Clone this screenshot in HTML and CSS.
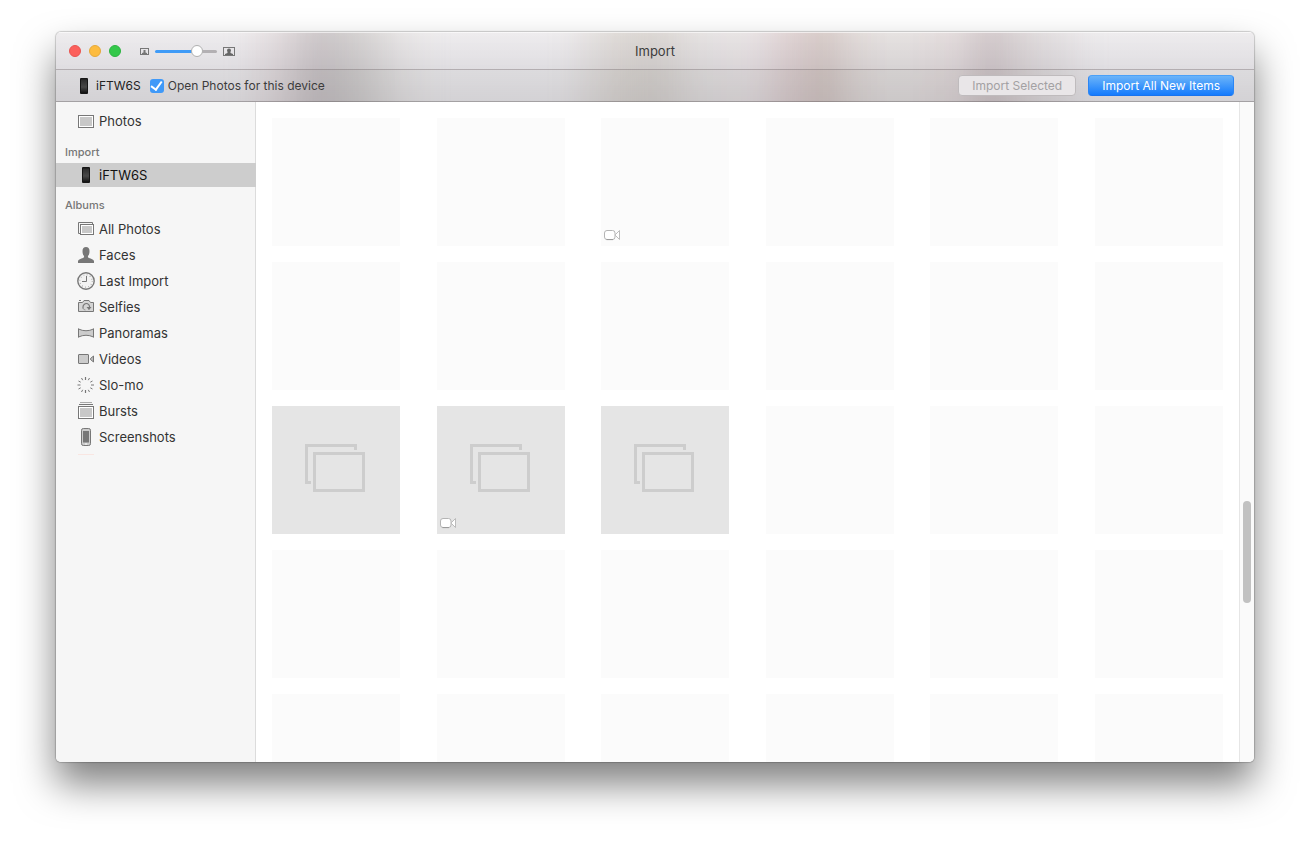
FILE: index.html
```html
<!DOCTYPE html>
<html lang="en">
<head>
<meta charset="utf-8">
<title>Import</title>
<link rel="stylesheet" href="styles.css">
</head>
<body>
<svg class="defs" aria-hidden="true">
  <defs>
    <linearGradient id="phone-body" x1="0" y1="0" x2="0" y2="1">
      <stop offset="0" stop-color="#2c2c2c"/>
      <stop offset="0.6" stop-color="#484848"/>
      <stop offset="1" stop-color="#1c1c1c"/>
    </linearGradient>
    <symbol id="phone" viewBox="0 0 18 18">
      <rect x="5" y="1" width="8" height="16" rx="1" fill="#161616"/>
      <rect x="6" y="2.500" width="6" height="12.500" fill="url(#phone-body)"/>
    </symbol>
    <symbol id="placeholder" viewBox="0 0 62 48">
      <path d="M6 38.500H1.500V1.500H50.500V6M9.500 9.500h49v37h-49z" fill="none" stroke="#cdcdcd" stroke-width="3"/>
    </symbol>
    <symbol id="clip" viewBox="0 0 18 12">
      <path d="M11.500 5.500 15.500 1.500v9l-4-4z" fill="#fff" stroke="#b4b4b4" stroke-width=".9"/>
      <rect x=".5" y="1.500" width="10.500" height="9" rx="2.500" fill="#fff" stroke="#b4b4b4"/>
      <path d="M2.500 10.600h6.500" stroke="#999"/>
    </symbol>
  </defs>
</svg>
<div class="window">
  <header class="chrome">
    <div class="titlebar">
      <div class="title-left">
        <div class="lights">
          <button class="light close" type="button" aria-label="Close"></button>
          <button class="light minimize" type="button" aria-label="Minimize"></button>
          <button class="light zoom" type="button" aria-label="Zoom"></button>
        </div>
        <div class="sizer">
          <svg width="9" height="7" viewBox="0 0 9 7"><rect x=".5" y=".5" width="8" height="6" fill="none" stroke="#777"/><path d="M2 6V5l1.500-.6V2h2v2.400L7 5v1z" fill="#777"/></svg>
          <input class="slider" type="range" min="0" max="100" value="72" aria-label="Thumbnail size">
          <svg width="12" height="9" viewBox="0 0 12 9"><rect x=".5" y=".5" width="11" height="8" fill="none" stroke="#777"/><path d="M2 8V7l2.500-1V5L4 3.500Q4 1.500 6 1.500T8 3.500L7.500 5v1L10 7v1z" fill="#666"/></svg>
        </div>
      </div>
      <h1 class="title">Import</h1>
      <div></div>
    </div>
    <div class="toolbar">
      <svg class="icon" width="18" height="18"><use href="#phone"/></svg>
      <span class="device">iFTW6S</span>
      <label class="check"><input type="checkbox" checked>Open Photos for this device</label>
      <div class="actions">
        <button class="btn" type="button" disabled>Import Selected</button>
        <button class="btn primary" type="button">Import All New Items</button>
      </div>
    </div>
  </header>
  <div class="content">
    <nav class="sidebar">
      <a class="item" href="#photos"><svg class="icon" width="18" height="18" viewBox="0 0 18 18"><rect x="1.500" y="3.500" width="15" height="12" fill="#fff" stroke="#777"/><rect x="3" y="5" width="12" height="9" fill="#c8c8c8"/></svg>Photos</a>
      <h2 class="heading">Import</h2>
      <a class="item selected" href="#device"><svg class="icon" width="18" height="18"><use href="#phone"/></svg>iFTW6S</a>
      <h2 class="heading">Albums</h2>
      <a class="item" href="#all"><svg class="icon" width="18" height="18" viewBox="0 0 18 18"><path d="M3 13.500H1.500v-11h14V4" fill="none" stroke="#777"/><rect x="3.500" y="4.500" width="13" height="10" fill="#fff" stroke="#777"/><rect x="5" y="6" width="10" height="7" fill="#c8c8c8"/></svg>All Photos</a>
      <a class="item" href="#faces"><svg class="icon" width="18" height="18" viewBox="0 0 18 18"><path d="M1 17v-2c.3-1.700 3-2.200 5-3 1-.4 1.200-1 1-2C6 9 5.500 7.500 5.500 5 5.500 2.500 6.800 1 9 1s3.500 1.500 3.500 4c0 2.500-.5 4-1.500 5-.2 1 0 1.600 1 2 2 .8 4.700 1.300 5 3v2z" fill="#777"/></svg>Faces</a>
      <a class="item" href="#last"><svg class="icon" width="18" height="18" viewBox="0 0 18 18"><circle cx="9" cy="9" r="8.200" fill="#f2f2f2" stroke="#777" stroke-width="1.400"/><circle cx="9" cy="9" r="6.200" fill="none" stroke="#999" stroke-width="1.200" stroke-dasharray=".7 2.546"/><path d="M9.500 4v5.500H5" fill="none" stroke="#777"/></svg>Last Import</a>
      <a class="item" href="#selfies"><svg class="icon" width="18" height="18" viewBox="0 0 18 18"><path d="M1.500 4.500h4l1.500-2h5l1.500 2h3v9h-15z" fill="#d4d4d4" stroke="#777" stroke-linejoin="round"/><path d="M2 2.500h2" stroke="#777"/><path d="M6 9a3.300 3.300 0 1 1 5.500 2.300M6 9v1.500" fill="none" stroke="#777" stroke-width="1.200"/><path d="M9.500 9h5L12 12z" fill="#777"/><path d="M6 10q.5 2 2.500 2" fill="none" stroke="#999"/></svg>Selfies</a>
      <a class="item" href="#panoramas"><svg class="icon" width="18" height="18" viewBox="0 0 18 18"><path d="M1.500 5Q9 8.500 16.500 5v8Q9 9.500 1.500 13z" fill="#ccc" stroke="#777"/><path d="M1.500 4.500v9M16.500 4.500v9" stroke="#777"/></svg>Panoramas</a>
      <a class="item" href="#videos"><svg class="icon" width="18" height="18" viewBox="0 0 18 18"><rect x="1.500" y="4.500" width="10" height="9" rx=".5" fill="#ccc" stroke="#777"/><path d="M13.500 8.500 16.500 6v6l-3-2.500z" fill="#bbb" stroke="#777"/></svg>Videos</a>
      <a class="item" href="#slomo"><svg class="icon" width="18" height="18" viewBox="0 0 18 18"><g stroke="#777" stroke-width="1.200"><path d="M8.500 1v3M8.500 14v3M.5 9h3M14 9h3"/><path d="M4.500 2l1.200 2.200M12.500 2l-1.200 2.200M1.500 5l2.200 1.200M15.500 5l-2.200 1.200M1.500 13l2.200-1.200M15.500 13l-2.200-1.200M4.500 16l1.200-2.200M12.500 16l-1.200-2.200" stroke-width="1"/></g></svg>Slo-mo</a>
      <a class="item" href="#bursts"><svg class="icon" width="18" height="18" viewBox="0 0 18 18"><path d="M3 .5h12" stroke="#aaa"/><path d="M2 2.500h14" stroke="#777"/><rect x="1.500" y="4.500" width="15" height="12" fill="#fff" stroke="#777"/><rect x="3" y="6" width="12" height="9" fill="#c8c8c8"/></svg>Bursts</a>
      <a class="item" href="#screenshots"><svg class="icon" width="18" height="18" viewBox="0 0 18 18"><rect x="4.500" y=".5" width="9" height="17" rx="1.800" fill="#ccc" stroke="#777"/><rect x="6" y="3" width="6" height="11.500" fill="#777"/><path d="M8 16h2" stroke="#fff"/></svg>Screenshots</a>
      <div class="more"></div>
    </nav>
    <main class="grid">
      <div class="tile"></div><div class="tile"></div>
      <div class="tile"><svg class="clip" width="18" height="12"><use href="#clip"/></svg></div>
      <div class="tile"></div><div class="tile"></div><div class="tile"></div>
      <div class="tile"></div><div class="tile"></div><div class="tile"></div><div class="tile"></div><div class="tile"></div><div class="tile"></div>
      <div class="tile pending"><svg width="62" height="48"><use href="#placeholder"/></svg></div>
      <div class="tile pending"><svg width="62" height="48"><use href="#placeholder"/></svg><svg class="clip" width="18" height="12"><use href="#clip"/></svg></div>
      <div class="tile pending"><svg width="62" height="48"><use href="#placeholder"/></svg></div>
      <div class="tile"></div><div class="tile"></div><div class="tile"></div>
      <div class="tile"></div><div class="tile"></div><div class="tile"></div><div class="tile"></div><div class="tile"></div><div class="tile"></div>
      <div class="tile"></div><div class="tile"></div><div class="tile"></div><div class="tile"></div><div class="tile"></div><div class="tile"></div>
    </main>
    <div class="scrollbar"><div class="before"></div><div class="thumb"></div><div class="after"></div></div>
  </div>
</div>
</body>
</html>
```
FILE: styles.css
```css
* { box-sizing: border-box; }
body {
  margin: 0;
  height: 100vh;
  padding: 32px 56px 80px;
  display: flex;
  overflow: hidden;
  background: #fff;
  font: 13px/16px Inter, "Liberation Sans", sans-serif;
  color: #3c3c3c;
}
.defs { position: absolute; width: 0; height: 0; }
.window {
  flex: 1;
  min-width: 0;
  display: flex;
  flex-direction: column;
  border-radius: 5px;
  overflow: hidden;
  background: #fff;
  box-shadow: 0 0 1px 1px rgba(0, 0, 0, .18), 0 22px 38px rgba(0, 0, 0, .5);
}
.chrome { position: relative; isolation: isolate; overflow: hidden; }
/* Photo colours showing through the translucent header */
.chrome::before {
  content: "";
  position: absolute;
  inset: -30px 0;
  z-index: -1;
  filter: blur(10px);
  background: linear-gradient(90deg,
    transparent 15%, rgba(190, 155, 155, .18) 18%, rgba(130, 115, 115, .38) 22%,
    rgba(145, 140, 130, .34) 25%, rgba(195, 190, 170, .14) 29%, transparent 32%,
    transparent 42%, rgba(170, 155, 125, .26) 47%, rgba(170, 158, 135, .32) 50%,
    rgba(200, 190, 175, .2) 54%, rgba(220, 195, 190, .2) 58%, rgba(190, 140, 135, .3) 61%,
    rgba(165, 125, 105, .36) 64%, rgba(190, 165, 145, .26) 67%, rgba(210, 200, 185, .24) 70%,
    rgba(195, 165, 155, .26) 75%, rgba(145, 115, 115, .36) 78%, rgba(165, 145, 140, .26) 81%,
    transparent 87%);
}
.titlebar {
  display: grid;
  grid-template-columns: 1fr auto 1fr;
  align-items: center;
  height: 38px;
  padding: 0 13px;
  background: linear-gradient(rgba(200, 194, 200, .3), rgba(156, 150, 162, .32));
  border-bottom: 1px solid rgba(90, 80, 85, .4);
  box-shadow: inset 0 1px rgba(255, 255, 255, .6);
}
.title { margin: 0; font-size: 13px; font-weight: 400; }
.title-left, .lights, .sizer { display: flex; align-items: center; }
.title-left { gap: 19px; }
.lights { gap: 8px; }
.sizer { gap: 6px; padding-top: 1px; }
.light { width: 12px; height: 12px; padding: 0; border: 1px solid; border-radius: 50%; }
.close { background: #fc605c; border-color: #e95450; }
.minimize { background: #fdbc40; border-color: #e6a93a; }
.zoom { background: #34c84a; border-color: #2cb441; }
.slider { -webkit-appearance: none; appearance: none; width: 62px; height: 14px; margin: 0; background: none; }
.slider::-webkit-slider-runnable-track {
  height: 3px;
  border-radius: 2px;
  background: linear-gradient(90deg, #3f9bf7 70%, #b3b0b3 70%);
}
.slider::-webkit-slider-thumb {
  -webkit-appearance: none;
  width: 12px;
  height: 12px;
  margin-top: -5px;
  border: 1px solid #b0b0b0;
  border-radius: 50%;
  background: #fff;
}
.toolbar {
  display: flex;
  align-items: center;
  height: 32px;
  padding: 0 20px 0 19px;
  background: linear-gradient(rgba(120, 115, 125, .26), rgba(120, 115, 125, .32));
  border-bottom: 1px solid rgba(80, 75, 78, .4);
  font-size: 12px;
}
.icon { flex: none; }
.device { margin-left: 3px; color: #222; }
.check { display: flex; align-items: center; gap: 4px; margin-left: 9px; }
.check input {
  -webkit-appearance: none;
  appearance: none;
  width: 14px;
  height: 14px;
  margin: 0;
  border-radius: 3px;
  background: #3f99f8;
  display: grid;
  place-items: center;
}
.check input::before {
  content: "";
  width: 5px;
  height: 9px;
  margin-bottom: 2px;
  border: solid #fff;
  border-width: 0 2px 2px 0;
  transform: rotate(36deg);
}
.actions { display: flex; gap: 12px; margin-left: auto; }
.btn {
  height: 21px;
  padding: 0 13px;
  border: 1px solid #bfbbbd;
  border-radius: 4px;
  background: #e9e6e8;
  color: #a3a1a3;
  font: inherit;
  line-height: 19px;
}
.primary {
  border-color: #4ba1f8 #2b86f5 #1873ee;
  background: linear-gradient(#6bb4f9, #147bfd);
  color: #fff;
}
.content { flex: 1; min-height: 0; display: flex; }
.sidebar {
  flex: none;
  width: 200px;
  padding-top: 6px;
  background: #f6f6f6;
  border-right: 1px solid #dcdcdc;
}
.item {
  display: flex;
  align-items: center;
  gap: 4px;
  height: 26px;
  padding-left: 21px;
  color: #333;
  text-decoration: none;
}
.selected { height: 24px; margin-right: -1px; background: #cdcdcd; color: #111; }
.heading { margin: 0; padding: 8px 9px 0; font-size: 11px; font-weight: 500; line-height: 21px; color: #777; }
.more { width: 16px; height: 1px; margin: 4px 0 0 22px; background: #f9e6e2; }
.grid {
  flex: 1;
  min-width: 0;
  padding: 16px;
  display: grid;
  grid-template-columns: repeat(auto-fill, 128px);
  grid-auto-rows: 128px;
  gap: 16px;
  justify-content: space-between;
  overflow: hidden;
}
.tile { position: relative; display: grid; place-items: center; background: #fbfbfb; }
.pending { background: #e5e5e5; }
.pending > svg { margin-bottom: 4px; }
.tile > .clip { position: absolute; left: 3px; bottom: 5px; margin: 0; }
.scrollbar {
  flex: none;
  width: 15px;
  padding: 0 3px;
  display: flex;
  flex-direction: column;
  background: #fafafa;
  border-left: 1px solid #e6e6e6;
}
.before { flex: 399; }
.thumb { flex: 102; width: 8px; border-radius: 4px; background: #c1c1c1; }
.after { flex: 159; }
```
